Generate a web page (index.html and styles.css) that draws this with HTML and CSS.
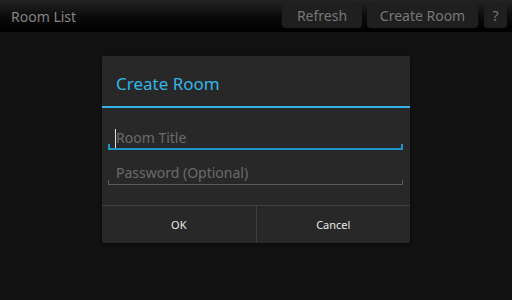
FILE: index.html
```html
<!DOCTYPE html>
<html lang="en">
<head>
  <meta charset="UTF-8" />
  <meta name="viewport" content="width=device-width, initial-scale=1.0"/>
  <title>Room List</title>
  <link rel="stylesheet" href="styles.css">
</head>
<body>
  <div class="topbar">
    <h1>Room List</h1>
    <div class="actions">
      <button class="bar-btn refresh">Refresh</button>
      <button class="bar-btn create">Create Room</button>
      <button class="bar-btn help">?</button>
    </div>
  </div>

  <div class="overlay">
    <div class="dialog">
      <h2>Create Room</h2>
      <form class="fields">
        <div class="field active">
          <span class="cursor"></span>
          <input type="text" placeholder="Room Title" />
        </div>
        <div class="field">
          <input type="password" placeholder="Password (Optional)" />
        </div>
      </form>
      <div class="dialog-buttons">
        <button>OK</button>
        <button>Cancel</button>
      </div>
    </div>
  </div>
</body>
</html>
```

FILE: styles.css
```css
* {
  box-sizing: border-box;
}

body {
  margin: 0;
  width: 512px;
  height: 300px;
  background: #111111;
  font-family: "Noto Sans", "DejaVu Sans", sans-serif;
  overflow: hidden;
}

.topbar {
  height: 32px;
  display: flex;
  align-items: center;
  justify-content: space-between;
  padding: 0 5px 0 11px;
  background: linear-gradient(#232323, #0a0a0a 55%, #000 100%);
}

.topbar h1 {
  margin: 0;
  font-size: 14px;
  font-weight: normal;
  color: #858585;
}

.actions {
  display: flex;
  gap: 4px;
  align-self: flex-start;
  padding-top: 3px;
}

.bar-btn {
  height: 25px;
  border: none;
  border-radius: 4px;
  background: #1f1f1f;
  color: #777;
  font-family: inherit;
  font-size: 14px;
  padding: 0;
}

.refresh {
  width: 80px;
}

.create {
  width: 111px;
  margin-left: 1px;
}

.help {
  width: 23px;
  margin-left: 2px;
}

.overlay {
  display: flex;
  padding: 24px 0 0 102px;
}

.dialog {
  width: 308px;
  height: 187px;
  background: #282828;
  border-radius: 2px;
  box-shadow: 0 1px 3px rgba(0,0,0,0.6);
  display: flex;
  flex-direction: column;
}

.dialog h2 {
  margin: 0;
  height: 52px;
  padding: 16px 0 0 14px;
  font-size: 17px;
  font-weight: normal;
  color: #33b5e5;
  border-bottom: 2px solid #33b5e5;
}

.fields {
  padding: 18px 7px 0 6px;
  display: flex;
  flex-direction: column;
  gap: 11px;
}

.field {
  position: relative;
  height: 24px;
  border-bottom: 1px solid #5a5a5a;
}

.field::before,
.field::after {
  content: "";
  position: absolute;
  bottom: 0;
  width: 1px;
  height: 4px;
  background: #5a5a5a;
}

.field::before {
  left: 0;
}

.field::after {
  right: 0;
}

.field.active {
  border-bottom: 2px solid #1e95c8;
}

.field.active::before,
.field.active::after {
  width: 2px;
  background: #1e95c8;
}

.field input {
  width: 100%;
  height: 100%;
  border: none;
  background: transparent;
  padding: 0 0 0 8px;
  font-family: inherit;
  font-size: 14px;
  color: #ddd;
  outline: none;
}

.field input::placeholder {
  color: #6b6b6b;
}

.cursor {
  position: absolute;
  left: 7px;
  top: 3px;
  width: 1px;
  height: 19px;
  background: #e0e0e0;
}

.dialog-buttons {
  margin-top: auto;
  height: 38px;
  display: flex;
  border-top: 1px solid #3e3e3e;
}

.dialog-buttons button {
  flex: 1;
  border: none;
  background: transparent;
  color: #e8e8e8;
  font-family: inherit;
  font-size: 11px;
  padding: 0;
}

.dialog-buttons button + button {
  border-left: 1px solid #3e3e3e;
}
```
